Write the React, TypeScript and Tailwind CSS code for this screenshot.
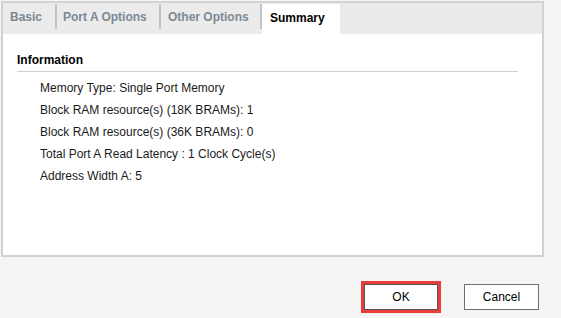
const tabs = [
  { label: 'Basic', width: 'w-[54px]', pad: 'pl-[7px]' },
  { label: 'Port A Options', width: 'w-[104px]', pad: 'pl-[6px]' },
  { label: 'Other Options', width: 'w-[101px]', pad: 'pl-[7px]' },
];

const info = [
  'Memory Type: Single Port Memory',
  'Block RAM resource(s) (18K BRAMs): 1',
  'Block RAM resource(s) (36K BRAMs): 0',
  'Total Port A Read Latency : 1 Clock Cycle(s)',
  'Address Width A: 5',
];

export default function App() {
  return (
    <div className="h-[318px] w-[561px] overflow-hidden bg-[#f5f5f5] pl-px pt-px font-['Liberation_Sans',Arial,sans-serif] text-[12px] text-[#1a1a1a]">
      {/* Tabbed panel */}
      <div className="flex h-[256px] w-[543px] flex-col border-2 border-[#d2d2d2] bg-white">
        <div className="flex h-[31px] items-start bg-[#ebebeb] pt-px">
          {tabs.map((tab) => (
            <div
              key={tab.label}
              className={`flex h-[25px] items-center border-r-2 border-[#c4c4c4] font-bold text-[#7c8893] ${tab.width} ${tab.pad}`}
            >
              {tab.label}
            </div>
          ))}
          <div className="flex h-[30px] w-[78px] items-center bg-white pb-[3px] pl-[8px] font-bold text-black">
            Summary
          </div>
        </div>

        {/* Summary content */}
        <div className="ml-[14px] mr-[24px] pt-[19px]">
          <div className="border-b border-[#cfcfcf] pb-[3px] font-bold leading-[15px] text-black">
            Information
          </div>
          <div className="pl-[23px] pt-[5px]">
            {info.map((line) => (
              <div key={line} className="h-[22px] leading-[22px]">
                {line}
              </div>
            ))}
          </div>
        </div>
      </div>

      {/* Dialog buttons */}
      <div className="mt-[27px] flex justify-end gap-[26px] pr-[22px]">
        <button className="h-[26px] w-[74px] border border-[#555] bg-white text-black outline-[3px] outline-[#ec3b3b] outline">
          OK
        </button>
        <button className="h-[26px] w-[75px] border border-[#707070] bg-white text-black">
          Cancel
        </button>
      </div>
    </div>
  );
}
